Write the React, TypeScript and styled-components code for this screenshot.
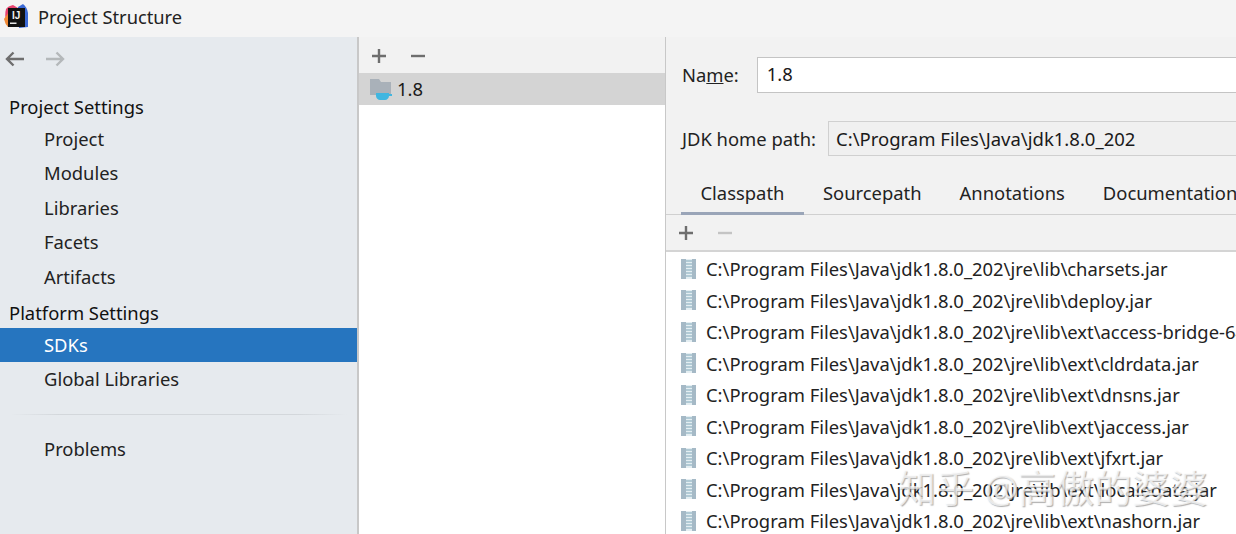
import { createGlobalStyle } from 'styled-components'
import styled from 'styled-components'

const GlobalStyle = createGlobalStyle`
  html, body {
    margin: 0;
    padding: 0;
    background: #f2f2f2;
  }
  body {
    font-family: "Noto Sans", "Noto Sans CJK SC", sans-serif;
    color: #1a1a1a;
    overflow: hidden;
  }
`

const projectItems = ['Project', 'Modules', 'Libraries', 'Facets', 'Artifacts']
const platformItems = ['SDKs', 'Global Libraries']

const jars = [
  'charsets.jar',
  'deploy.jar',
  'ext\\access-bridge-64.jar',
  'ext\\cldrdata.jar',
  'ext\\dnsns.jar',
  'ext\\jaccess.jar',
  'ext\\jfxrt.jar',
  'ext\\localedata.jar',
  'ext\\nashorn.jar',
]

const tabs = ['Classpath', 'Sourcepath', 'Annotations', 'Documentation']

const IdeaLogo = () => (
  <svg width="25" height="25" viewBox="0 0 25 25">
    <path d="M2 5 Q4 2 9 1 L14 4 L8 20 L3 18 Q0 12 2 5Z" fill="#e8436f" />
    <path d="M0 15 L5 8 L9 22 L4 23 Q1 20 0 15Z" fill="#f28a35" />
    <path d="M14 3 L19 0 Q23 3 24 9 L24 23 L15 24Z" fill="#3b69d6" />
    <rect x="4" y="4" width="17" height="19" fill="#111" />
    <text x="12.2" y="14.5" fontFamily="Liberation Sans" fontSize="10" fontWeight="700" fill="#f2f2f2" textAnchor="middle">
      IJ
    </text>
    <rect x="6" y="18.5" width="6.5" height="1.5" fill="#e8e8e8" />
  </svg>
)

const Arrow = ({ flip, shade }: { flip?: boolean; shade: string }) => (
  <svg width="20" height="16" viewBox="0 0 20 16" style={flip ? { transform: 'scaleX(-1)' } : undefined}>
    <path d="M19 8H2M8.5 1.5 2 8l6.5 6.5" fill="none" stroke={shade} strokeWidth="2.4" />
  </svg>
)

const Plus = ({ shade = '#6e6e6e' }: { shade?: string }) => (
  <svg width="16" height="16" viewBox="0 0 16 16">
    <path d="M8 1v14M1 8h14" stroke={shade} strokeWidth="2.4" fill="none" />
  </svg>
)

const Minus = ({ shade = '#6e6e6e' }: { shade?: string }) => (
  <svg width="16" height="16" viewBox="0 0 16 16">
    <path d="M1 8h14" stroke={shade} strokeWidth="2.4" fill="none" />
  </svg>
)

const SdkFolder = () => (
  <svg width="24" height="24" viewBox="0 0 24 24" style={{ flex: 'none' }}>
    <path d="M1 2h9l2 3h10v13H1z" fill="#a9b1b9" />
    <path d="M7 16h13v3c0 2-2 4-4 4h-5c-2 0-4-2-4-4z" fill="#40b6e0" />
    <path d="M20 17h3v2h-3z" fill="#40b6e0" />
  </svg>
)

const JarIcon = () => (
  <svg width="15" height="20" viewBox="0 0 15 20" style={{ flex: 'none' }}>
    <rect x="0" y="0" width="15" height="20" fill="#a5b9c6" />
    <rect x="5" y="0" width="6" height="20" fill="#e4eef2" />
    <path d="M5 2h6M5 5h6M5 8h6M5 11h6M5 14h6M5 17h6" stroke="#7fa6b8" strokeWidth="1" />
  </svg>
)

export default function App() {
  return (
    <Window>
      <GlobalStyle />
      <TitleBar>
        <IdeaLogo />
        <TitleText>Project Structure</TitleText>
      </TitleBar>
      <Body>
        <Sidebar>
          <NavArrows>
            <Arrow shade="#6e6e6e" />
            <Arrow flip shade="#b4b8ba" />
          </NavArrows>
          <SideHead>Project Settings</SideHead>
          {projectItems.map((label) => (
            <SideItem key={label}>{label}</SideItem>
          ))}
          <SideHead $gap>Platform Settings</SideHead>
          {platformItems.map((label) => (
            <SideItem key={label} $selected={label === 'SDKs'}>
              {label}
            </SideItem>
          ))}
          <SideDivider />
          <SideItem>Problems</SideItem>
        </Sidebar>
        <MiddlePane>
          <MiddleToolbar>
            <Plus />
            <Minus />
          </MiddleToolbar>
          <SdkRow>
            <SdkFolder />
            <SdkName>1.8</SdkName>
          </SdkRow>
        </MiddlePane>
        <DetailPane>
          <FieldRow $top={20}>
            <NameLabel>
              Na<u>m</u>e:
            </NameLabel>
            <NameInput>1.8</NameInput>
          </FieldRow>
          <FieldRow $top={28}>
            <FieldLabel>JDK home path:</FieldLabel>
            <PathInput>C:\Program Files\Java\jdk1.8.0_202</PathInput>
          </FieldRow>
          <TabBar>
            {tabs.map((t, i) => (
              <Tab key={t} $active={i === 0}>
                {t}
              </Tab>
            ))}
          </TabBar>
          <PathToolbar>
            <Plus />
            <Minus shade="#c4c4c4" />
          </PathToolbar>
          <JarList>
            {jars.map((j) => (
              <JarRow key={j}>
                <JarIcon />
                <span>C:\Program Files\Java\jdk1.8.0_202\jre\lib\{j}</span>
              </JarRow>
            ))}
          </JarList>
          <Watermark>知乎 @高傲的婆婆</Watermark>
        </DetailPane>
      </Body>
    </Window>
  )
}

const Window = styled.div`
  width: 1236px;
  height: 534px;
  overflow: hidden;
  display: flex;
  flex-direction: column;
  font-size: 18.4px;
`

const TitleBar = styled.div`
  height: 37px;
  flex: none;
  display: flex;
  align-items: center;
  gap: 9px;
  padding: 0 0 4px 4px;
  box-sizing: border-box;
  background: #f4f4f4;
`

const TitleText = styled.div`
  font-size: 18.3px;
  color: #222;
  margin-bottom: 1px;
`

const Body = styled.div`
  flex: 1;
  display: flex;
  min-height: 0;
`

const Sidebar = styled.div`
  width: 359px;
  flex: none;
  box-sizing: border-box;
  background: #e6eaee;
  border-right: 2px solid #c8c8c8;
`

const NavArrows = styled.div`
  height: 54.6px;
  display: flex;
  align-items: center;
  gap: 20px;
  padding: 0 0 11px 5px;
  box-sizing: border-box;
`

const SideHead = styled.div<{ $gap?: boolean }>`
  height: 30px;
  line-height: 30px;
  margin-top: ${(p) => (p.$gap ? '3.5px' : '0')};
  padding-left: 9px;
  color: #111;
`

const SideItem = styled.div<{ $selected?: boolean }>`
  height: 34.5px;
  line-height: 34.5px;
  padding-left: 44px;
  color: ${(p) => (p.$selected ? '#fff' : '#222')};
  background: ${(p) => (p.$selected ? '#2675bf' : 'transparent')};
`

const SideDivider = styled.div`
  height: 1px;
  margin: 17.5px 10px 17px 10px;
  background: linear-gradient(to right, #e6eaee, #d3d7db 15%, #d3d7db 85%, #e6eaee);
`

const MiddlePane = styled.div`
  width: 307px;
  flex: none;
  box-sizing: border-box;
  background: #fff;
  border-right: 1px solid #c8c8c8;
`

const MiddleToolbar = styled.div`
  height: 36px;
  display: flex;
  align-items: center;
  gap: 23px;
  padding: 1px 0 0 12px;
  box-sizing: border-box;
  background: #f2f2f2;
`

const SdkRow = styled.div`
  height: 32px;
  display: flex;
  align-items: center;
  gap: 4px;
  padding-left: 10px;
  background: #d4d4d4;
`

const SdkName = styled.span`
  margin-bottom: 2px;
`

const DetailPane = styled.div`
  flex: 1;
  min-width: 0;
  position: relative;
  overflow: hidden;
  background: #f2f2f2;
`

const FieldRow = styled.div<{ $top: number }>`
  display: flex;
  align-items: center;
  gap: 18px;
  margin-top: ${(p) => p.$top}px;
  padding-left: 16px;
`

const FieldLabel = styled.div`
  white-space: nowrap;
  color: #222;
`

const NameLabel = styled(FieldLabel)`
  margin-bottom: 2px;
`

const NameInput = styled.div`
  flex: 1;
  height: 36px;
  line-height: 32px;
  padding-left: 9px;
  margin-right: -4px;
  box-sizing: border-box;
  background: #fff;
  border: 1px solid #c4c4c4;
`

const PathInput = styled.div`
  flex: 1;
  height: 35px;
  line-height: 33px;
  padding-left: 7px;
  margin: 0 -4px 0 -6px;
  box-sizing: border-box;
  font-size: 18.5px;
  background: #f0f0f0;
  border: 1px solid #d0d0d0;
`

const TabBar = styled.div`
  height: 38px;
  margin-top: 21px;
  padding-left: 15px;
  display: flex;
  white-space: nowrap;
  box-sizing: border-box;
  border-bottom: 1px solid #d0d0d0;
`

const Tab = styled.div<{ $active?: boolean }>`
  padding: 0 ${(p) => (p.$active ? '19.5px' : '19px')};
  line-height: 32px;
  height: 38px;
  box-sizing: border-box;
  color: #222;
  border-bottom: ${(p) => (p.$active ? '3px solid #9aa5b8' : 'none')};
`

const PathToolbar = styled.div`
  height: 37px;
  display: flex;
  align-items: center;
  gap: 23px;
  padding-left: 12px;
  box-sizing: border-box;
  border-bottom: 2px solid #d4d4d4;
`

const JarList = styled.div`
  background: #fff;
  padding-top: 1px;
  height: 300px;
`

const JarRow = styled.div`
  height: 31.5px;
  display: flex;
  align-items: center;
  gap: 10px;
  padding-left: 15px;
  white-space: nowrap;
  color: #222;
`

const Watermark = styled.div`
  position: absolute;
  left: 232px;
  top: 421px;
  font-size: 38px;
  white-space: nowrap;
  color: rgba(255, 255, 255, 0.72);
  text-shadow: 1px 1px 1px rgba(110, 110, 110, 0.55);
  pointer-events: none;
`
